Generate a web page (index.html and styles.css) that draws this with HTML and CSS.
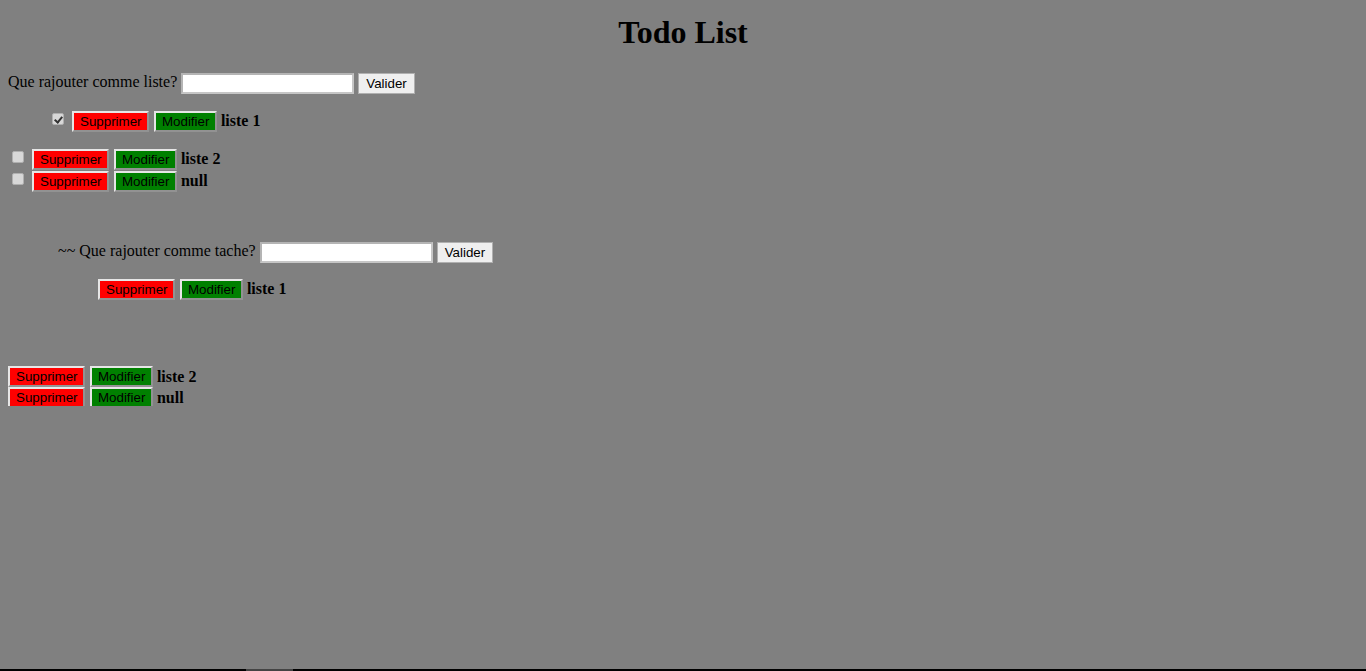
FILE: index.html
```html
<!DOCTYPE html>
<html lang="fr">
<head>
<meta charset="utf-8">
<title>Todo List</title>
<link rel="stylesheet" href="styles.css">
</head>
<body>
<h1 class="title">Todo List</h1>

<div class="form-line">
  <label>Que rajouter comme liste?</label> <input type="text" class="field"> <button class="btn btn-plain">Valider</button>
</div>

<div class="lists">
  <div class="row row-open"><input type="checkbox" class="check" checked> <button class="btn btn-del">Supprimer</button> <button class="btn btn-edit">Modifier</button> <b>liste 1</b></div>
  <div class="group">
    <div class="row"><input type="checkbox" class="check"> <button class="btn btn-del">Supprimer</button> <button class="btn btn-edit">Modifier</button> <b>liste 2</b></div>
    <div class="row"><input type="checkbox" class="check"> <button class="btn btn-del">Supprimer</button> <button class="btn btn-edit">Modifier</button> <b>null</b></div>
  </div>
</div>

<div class="form-line task-form">
  <label>~~ Que rajouter comme tache?</label> <input type="text" class="field"> <button class="btn btn-plain">Valider</button>
</div>

<div class="row task-row"><button class="btn btn-del">Supprimer</button> <button class="btn btn-edit">Modifier</button> <b>liste 1</b></div>

<div class="group bottom-group">
  <div class="row tight"><button class="btn btn-del">Supprimer</button> <button class="btn btn-edit">Modifier</button> <b>liste 2</b></div>
  <div class="row tight"><button class="btn btn-del">Supprimer</button> <button class="btn btn-edit">Modifier</button> <b>null</b></div>
</div>

<div class="hscroll"><div class="hscroll-thumb"></div></div>
</body>
</html>
```

FILE: styles.css
```css
html, body {
  background: #808080;
}

body {
  margin: 0 8px 8px;
  font-family: "Liberation Serif", "Times New Roman", serif;
  font-size: 16px;
  color: #000;
}

.title {
  text-align: center;
  font-size: 32px;
  font-weight: bold;
  margin: 14px 0 19px;
  line-height: 37px;
}

.form-line {
  height: 23px;
  line-height: 23px;
}

.field {
  box-sizing: border-box;
  width: 173px;
  height: 21px;
  padding: 1px 2px;
  border: 2px solid #c6c6c6;
  border-top-color: #b4b4b4;
  border-left-color: #b4b4b4;
  background: #fff;
  font: 13.33px "Liberation Sans", Arial, sans-serif;
  vertical-align: middle;
  margin: 0;
}

.btn {
  box-sizing: border-box;
  height: 21px;
  padding: 0 6px;
  margin: 0;
  font: 13.33px "Liberation Sans", Arial, sans-serif;
  color: #000;
  vertical-align: middle;
  border: 2px outset #e6e6e6;
}

.btn-plain {
  background: #efefef;
  border: 1px solid #b0b0b0;
  padding: 0 7px;
}

.btn-del {
  background: #ff0000;
  margin-right: 1px;
}

.btn-edit {
  background: #008000;
  padding: 0 5.5px;
}

.lists {
  margin-top: 16px;
}

.row {
  height: 22px;
  line-height: 22px;
  white-space: nowrap;
}

.row b {
  vertical-align: middle;
}

.row-open {
  padding-left: 40px;
}

.group {
  margin-top: 16px;
}

.check {
  -webkit-appearance: none;
  appearance: none;
  box-sizing: border-box;
  width: 12px;
  height: 12px;
  margin: 0 4px 0 4px;
  border: 1px solid #b0b0b0;
  border-radius: 2px;
  background: #d8d8d8;
  vertical-align: middle;
  position: relative;
  top: -2px;
}

/* tick drawn with two borders of a rotated box */
.check:checked::after {
  content: "";
  position: absolute;
  left: 3px;
  top: 1px;
  width: 3px;
  height: 6px;
  border: solid #333;
  border-width: 0 2px 2px 0;
  transform: rotate(40deg);
}

.task-form {
  margin-top: 48px;
  padding-left: 50px;
}

.task-row {
  margin-top: 15px;
  padding-left: 90px;
}

.bottom-group {
  margin-top: 65px;
}

.row.tight {
  height: 21px;
  line-height: 21px;
}

.hscroll {
  position: fixed;
  left: 0;
  right: 0;
  bottom: 0;
  height: 2px;
  background: #000;
}

.hscroll-thumb {
  margin-left: 246px;
  width: 47px;
  height: 2px;
  background: #444;
}
```
